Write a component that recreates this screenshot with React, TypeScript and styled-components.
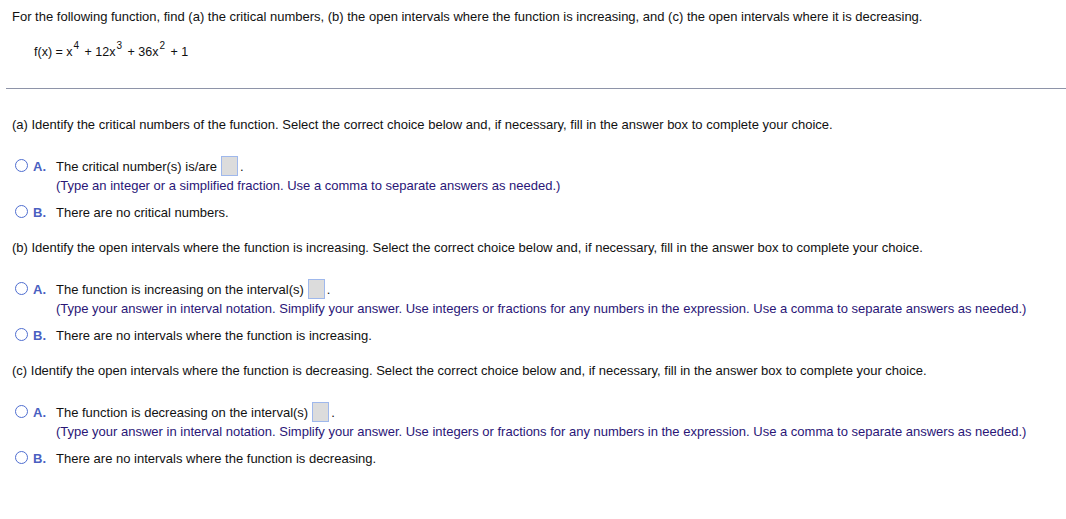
import styled, { createGlobalStyle } from 'styled-components';

const GlobalStyle = createGlobalStyle`
  body {
    margin: 0;
    background: #ffffff;
    font-family: Arial, "Liberation Sans", sans-serif;
    font-size: 13px;
    color: #111111;
  }
`;

const Page = styled.div`
  padding: 9px 0 0 12px;
`;

const Intro = styled.p`
  margin: 0;
  line-height: 15px;
`;

const Formula = styled.div`
  margin: 21px 0 0 22px;
  line-height: 15px;
  font-size: 12.5px;
  sup {
    font-size: 10px;
    line-height: 0;
    position: relative;
    top: -2px;
    margin-left: 1px;
    margin-right: 2px;
  }
`;

const Divider = styled.hr`
  margin: 28px 0 0 -6px;
  border: 0;
  border-top: 1px solid #8e94a8;
`;

const Part = styled.section`
  display: flex;
  flex-direction: column;
`;

const Prompt = styled.p<{ $top: number }>`
  margin: ${(p) => p.$top}px 0 0;
  line-height: 15px;
`;

const Choices = styled.div`
  display: flex;
  flex-direction: column;
  gap: 12px;
  margin-top: 27px;
`;

const Choice = styled.div`
  display: flex;
  align-items: flex-start;
`;

const Radio = styled.span`
  width: 11px;
  height: 11px;
  border: 1.5px solid #4f6ed0;
  border-radius: 50%;
  margin: 0 0 0 3px;
  flex: none;
`;

const Letter = styled.span`
  width: 23px;
  margin-left: 5px;
  font-weight: bold;
  color: #4a5fc1;
  line-height: 15px;
`;

const Body = styled.div`
  display: flex;
  flex-direction: column;
  gap: 4px;
  line-height: 15px;
`;

const Line = styled.div`
  display: flex;
  align-items: center;
`;

const AnswerBox = styled.span`
  display: inline-block;
  width: 15px;
  height: 18px;
  margin: -4px 2px -3px 4px;
  background: #dcdcdc;
  border: 1px solid #9fb8ec;
`;

const Hint = styled.div`
  color: #2a1677;
`;

type PartData = {
  prompt: string;
  answer: string;
  hint: string;
  none: string;
  top: number;
};

const parts: PartData[] = [
  {
    prompt:
      '(a) Identify the critical numbers of the function. Select the correct choice below and, if necessary, fill in the answer box to complete your choice.',
    answer: 'The critical number(s) is/are',
    hint: '(Type an integer or a simplified fraction. Use a comma to separate answers as needed.)',
    none: 'There are no critical numbers.',
    top: 28,
  },
  {
    prompt:
      '(b) Identify the open intervals where the function is increasing. Select the correct choice below and, if necessary, fill in the answer box to complete your choice.',
    answer: 'The function is increasing on the interval(s)',
    hint: '(Type your answer in interval notation. Simplify your answer. Use integers or fractions for any numbers in the expression. Use a comma to separate answers as needed.)',
    none: 'There are no intervals where the function is increasing.',
    top: 20,
  },
  {
    prompt:
      '(c) Identify the open intervals where the function is decreasing. Select the correct choice below and, if necessary, fill in the answer box to complete your choice.',
    answer: 'The function is decreasing on the interval(s)',
    hint: '(Type your answer in interval notation. Simplify your answer. Use integers or fractions for any numbers in the expression. Use a comma to separate answers as needed.)',
    none: 'There are no intervals where the function is decreasing.',
    top: 20,
  },
];

export default function App() {
  return (
    <>
      <GlobalStyle />
      <Page>
        <Intro>
          For the following function, find (a) the critical numbers, (b) the open intervals where the
          function is increasing, and (c) the open intervals where it is decreasing.
        </Intro>
        <Formula>
          f(x) = x<sup>4</sup> + 12x<sup>3</sup> + 36x<sup>2</sup> + 1
        </Formula>
        <Divider />
        {parts.map((part) => (
          <Part key={part.prompt}>
            <Prompt $top={part.top}>{part.prompt}</Prompt>
            <Choices>
              <Choice>
                <Radio />
                <Letter>A.</Letter>
                <Body>
                  <Line>
                    {part.answer}
                    <AnswerBox />.
                  </Line>
                  <Hint>{part.hint}</Hint>
                </Body>
              </Choice>
              <Choice>
                <Radio />
                <Letter>B.</Letter>
                <Body>{part.none}</Body>
              </Choice>
            </Choices>
          </Part>
        ))}
      </Page>
    </>
  );
}
